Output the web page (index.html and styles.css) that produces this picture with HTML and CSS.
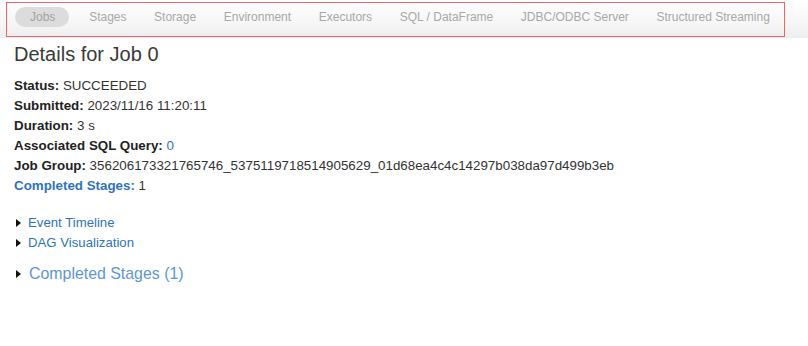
FILE: index.html
```
<!DOCTYPE html>
<html>
<head>
<meta charset="utf-8">
<link rel="stylesheet" href="styles.css">
</head>
<body>
<div class="navbar">
  <ul class="nav">
    <li class="item active">Jobs</li>
    <li class="item">Stages</li>
    <li class="item">Storage</li>
    <li class="item">Environment</li>
    <li class="item">Executors</li>
    <li class="item">SQL / DataFrame</li>
    <li class="item">JDBC/ODBC Server</li>
    <li class="item">Structured Streaming</li>
  </ul>
</div>
<div class="content">
  <h3 class="title">Details for Job 0</h3>
  <ul class="details">
    <li><strong>Status:</strong> SUCCEEDED</li>
    <li><strong>Submitted:</strong> 2023/11/16 11:20:11</li>
    <li><strong>Duration:</strong> 3 s</li>
    <li><strong>Associated SQL Query:</strong> <a class="link">0</a></li>
    <li><strong>Job Group:</strong> 356206173321765746_5375119718514905629_01d68ea4c4c14297b038da97d499b3eb</li>
    <li><a class="link"><strong>Completed Stages:</strong></a> 1</li>
  </ul>
  <div class="toggles">
    <div class="toggle"><span class="arrow"></span><a class="link">Event Timeline</a></div>
    <div class="toggle"><span class="arrow"></span><a class="link">DAG Visualization</a></div>
  </div>
  <div class="section"><span class="arrow"></span><a class="section-link">Completed Stages (1)</a></div>
</div>
</body>
</html>
```
FILE: styles.css
```
html, body {
  margin: 0;
  padding: 0;
  background: #fff;
  font-family: "Liberation Sans", Arial, sans-serif;
  color: #333;
}
.navbar {
  height: 38px;
  background: linear-gradient(to bottom, #ffffff 0%, #f6f6f6 60%, #eeeeee 100%);
  padding-top: 2px;
  box-sizing: border-box;
}
.nav {
  list-style: none;
  margin: 0 0 0 6px;
  padding: 4px 0 0 8px;
  width: 779px;
  height: 35px;
  box-sizing: border-box;
  border: 1px solid #e8666c;
  display: flex;
  align-items: flex-start;
}
.item {
  font-size: 12px;
  color: #a8a8a8;
  height: 20px;
  line-height: 20px;
  padding: 0 13.8px;
  white-space: nowrap;
}
.item.active {
  background: #dcdcdc;
  border-radius: 10px;
  padding: 0 14px 0 15px;
  margin-right: 6px;
  color: #a3a3a3;
}
.content {
  padding-left: 14px;
}
.title {
  margin: 3px 0 0 0;
  font-size: 20px;
  line-height: 26px;
  font-weight: normal;
  color: #3a3a3a;
}
.details {
  list-style: none;
  margin: 9px 0 0 0;
  padding: 0;
  font-size: 13.35px;
  line-height: 20px;
}
.details strong {
  color: #222;
}
.link {
  color: #2f73bd;
}
.link strong {
  color: #2f73bd;
}
.toggles {
  margin-top: 17px;
  font-size: 13.2px;
  line-height: 20px;
}
.toggle {
  display: flex;
  align-items: center;
}
.arrow {
  display: inline-block;
  width: 0;
  height: 0;
  border-left: 5px solid #111;
  border-top: 4px solid transparent;
  border-bottom: 4px solid transparent;
  margin: 0 7px 0 2px;
}
.section {
  margin-top: 9px;
  display: flex;
  align-items: center;
  line-height: 24px;
}
.section .arrow {
  margin-right: 8px;
}
.section-link {
  font-size: 15.9px;
  color: #5e96d2;
}
```
